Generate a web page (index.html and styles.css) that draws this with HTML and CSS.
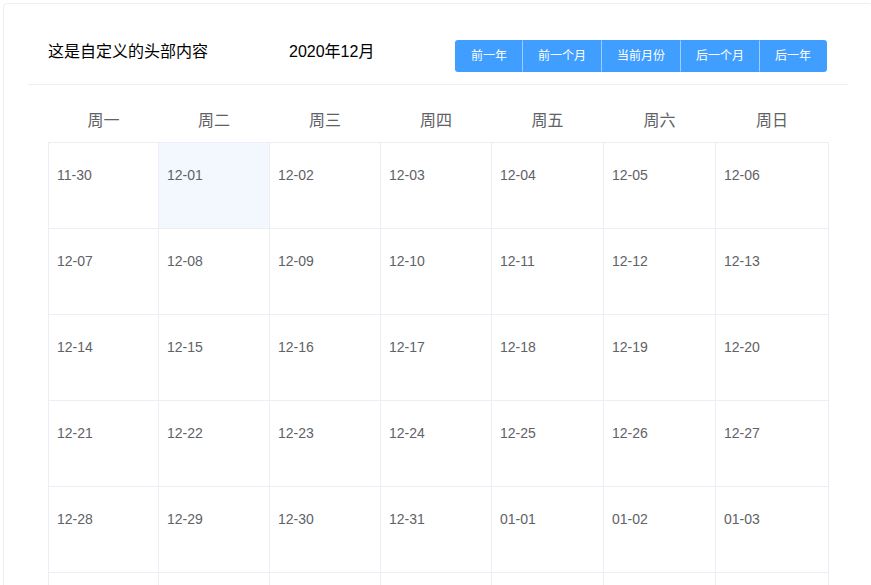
FILE: index.html
```html
<!DOCTYPE html>
<html lang="zh-CN">
<head>
<meta charset="utf-8">
<title>日历</title>
<link rel="stylesheet" href="styles.css">
</head>
<body>
<div class="page">
  <div class="card">
    <div class="calendar">
      <div class="cal-header">
        <span class="header-text">这是自定义的头部内容</span>
        <span class="header-month">2020年12月</span>
        <div class="btn-group">
          <button class="btn">前一年</button>
          <button class="btn">前一个月</button>
          <button class="btn">当前月份</button>
          <button class="btn">后一个月</button>
          <button class="btn">后一年</button>
        </div>
      </div>
      <div class="cal-body">
        <table class="cal-table">
          <colgroup>
            <col class="c1"><col class="c2"><col class="c3"><col class="c4"><col class="c5"><col class="c6"><col class="c7">
          </colgroup>
          <thead>
            <tr><th>周一</th><th>周二</th><th>周三</th><th>周四</th><th>周五</th><th>周六</th><th>周日</th></tr>
          </thead>
          <tbody>
            <tr>
              <td><div class="day"><p>11-30</p></div></td>
              <td class="selected"><div class="day"><p>12-01</p></div></td>
              <td><div class="day"><p>12-02</p></div></td>
              <td><div class="day"><p>12-03</p></div></td>
              <td><div class="day"><p>12-04</p></div></td>
              <td><div class="day"><p>12-05</p></div></td>
              <td><div class="day"><p>12-06</p></div></td>
            </tr>
            <tr>
              <td><div class="day"><p>12-07</p></div></td>
              <td><div class="day"><p>12-08</p></div></td>
              <td><div class="day"><p>12-09</p></div></td>
              <td><div class="day"><p>12-10</p></div></td>
              <td><div class="day"><p>12-11</p></div></td>
              <td><div class="day"><p>12-12</p></div></td>
              <td><div class="day"><p>12-13</p></div></td>
            </tr>
            <tr>
              <td><div class="day"><p>12-14</p></div></td>
              <td><div class="day"><p>12-15</p></div></td>
              <td><div class="day"><p>12-16</p></div></td>
              <td><div class="day"><p>12-17</p></div></td>
              <td><div class="day"><p>12-18</p></div></td>
              <td><div class="day"><p>12-19</p></div></td>
              <td><div class="day"><p>12-20</p></div></td>
            </tr>
            <tr>
              <td><div class="day"><p>12-21</p></div></td>
              <td><div class="day"><p>12-22</p></div></td>
              <td><div class="day"><p>12-23</p></div></td>
              <td><div class="day"><p>12-24</p></div></td>
              <td><div class="day"><p>12-25</p></div></td>
              <td><div class="day"><p>12-26</p></div></td>
              <td><div class="day"><p>12-27</p></div></td>
            </tr>
            <tr>
              <td><div class="day"><p>12-28</p></div></td>
              <td><div class="day"><p>12-29</p></div></td>
              <td><div class="day"><p>12-30</p></div></td>
              <td><div class="day"><p>12-31</p></div></td>
              <td><div class="day"><p>01-01</p></div></td>
              <td><div class="day"><p>01-02</p></div></td>
              <td><div class="day"><p>01-03</p></div></td>
            </tr>
            <tr>
              <td><div class="day"></div></td>
              <td><div class="day"></div></td>
              <td><div class="day"></div></td>
              <td><div class="day"></div></td>
              <td><div class="day"></div></td>
              <td><div class="day"></div></td>
              <td><div class="day"></div></td>
            </tr>
          </tbody>
        </table>
      </div>
    </div>
  </div>
</div>
</body>
</html>
```

FILE: styles.css
```css
html, body {
  margin: 0;
  padding: 0;
  overflow: hidden;
  background: #fff;
  font-family: "Liberation Sans", "Noto Sans CJK SC", sans-serif;
}

.page {
  padding: 3px;
}

.card {
  width: 870px;
  box-sizing: border-box;
  border: 1px solid #ebeef5;
  border-radius: 4px;
  background: #fff;
  padding: 24px;
}

.calendar {
  width: 820px;
}

.cal-header {
  display: flex;
  align-items: flex-start;
  padding: 12px 21px 12px 20px;
  border-bottom: 1px solid #ebeef5;
}

.header-text,
.header-month {
  font-size: 16px;
  line-height: 24px;
  color: #000;
}

.header-month {
  margin-left: 81px;
}

.btn-group {
  display: flex;
  margin-left: auto;
}

.btn {
  font-family: inherit;
  font-size: 12px;
  line-height: 1;
  padding: 9px 15px;
  color: #fff;
  background: #409eff;
  border: 1px solid #409eff;
  border-radius: 0;
  margin: 0 -1px 0 0;
  cursor: pointer;
  border-left-color: rgba(255, 255, 255, 0.5);
  border-right-color: rgba(255, 255, 255, 0.5);
}

.btn:first-child {
  border-radius: 3px 0 0 3px;
  border-left-color: #409eff;
}

.btn:last-child {
  border-radius: 0 3px 3px 0;
  border-right-color: #409eff;
  margin-right: 0;
}

.cal-body {
  padding: 12px 20px 35px;
}

.cal-table {
  width: 100%;
  table-layout: fixed;
  border-collapse: collapse;
}

.c1 { width: 110px; }
.c2 { width: 111px; }
.c3 { width: 111px; }
.c4 { width: 111px; }
.c5 { width: 112px; }
.c6 { width: 112px; }
.c7 { width: 113px; }

.cal-table th {
  padding: 13px 0 11px;
  font-size: 16px;
  line-height: 21px;
  font-weight: normal;
  color: #606266;
}

.cal-table td {
  border-right: 1px solid #ebeef5;
  border-bottom: 1px solid #ebeef5;
  vertical-align: top;
  padding: 0;
}

.cal-table tbody tr:first-child td {
  border-top: 1px solid #ebeef5;
}

.cal-table td:first-child {
  border-left: 1px solid #ebeef5;
}

.cal-table td.selected {
  background: #f2f8fe;
}

.day {
  box-sizing: border-box;
  height: 85px;
  padding: 8px;
  overflow: hidden;
}

.day p {
  margin: 14px 0;
  font-size: 14px;
  line-height: 21px;
  color: #606266;
}
```
